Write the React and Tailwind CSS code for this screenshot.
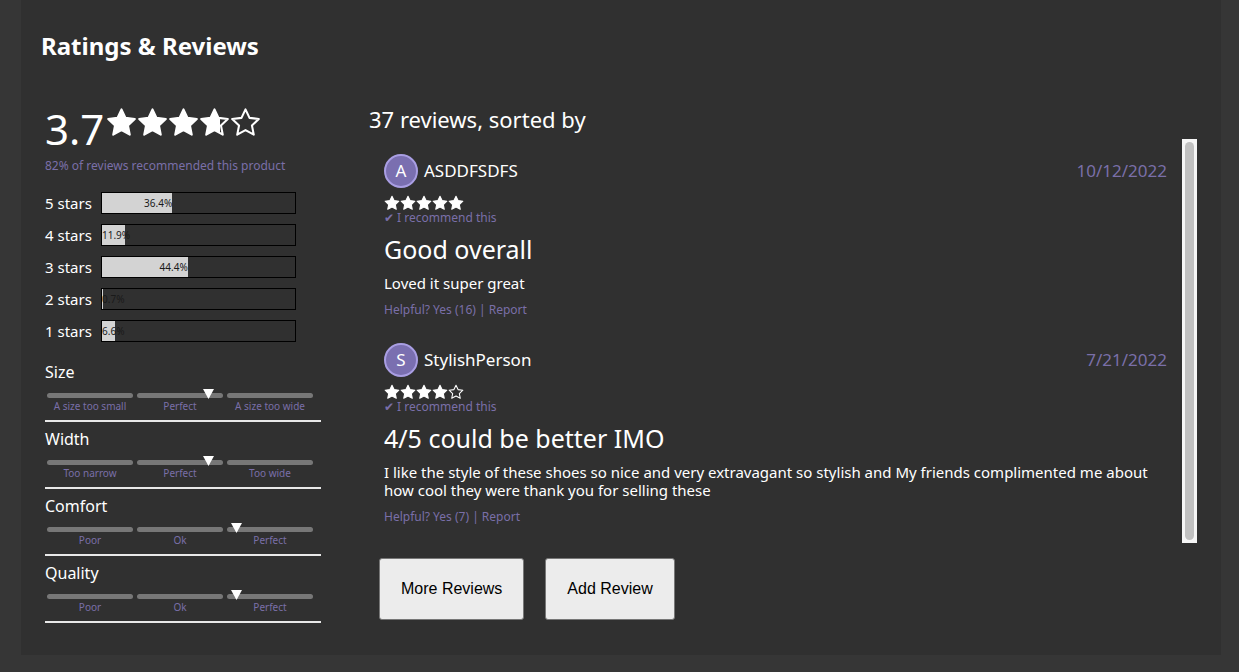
import React from "react";

const purple = "text-[#7a6fa8]";

const STAR = "M12 1.8l3.1 6.6 7.2.9-5.3 5 1.4 7.1L12 17.9l-6.4 3.5 1.4-7.1-5.3-5 7.2-.9z";

function Star({ fill = 1, size = 30, id }) {
  // fill: 0..1
  return (
    <svg width={size} height={size} viewBox="0 0 24 24" className="shrink-0">
      {fill > 0 && fill < 1 && (
        <defs>
          <linearGradient id={id}>
            <stop offset={fill} stopColor="#fff" />
            <stop offset={fill} stopColor="#fff" stopOpacity="0" />
          </linearGradient>
        </defs>
      )}
      <path
        d={STAR}
        fill={fill >= 1 ? "#fff" : fill <= 0 ? "none" : `url(#${id})`}
        stroke="#fff"
        strokeWidth="1.6"
        strokeLinejoin="round"
      />
    </svg>
  );
}

function Stars({ value, size, prefix }) {
  return (
    <div className="flex">
      {[0, 1, 2, 3, 4].map((i) => (
        <Star key={i} size={size} id={`${prefix}-${i}`} fill={Math.max(0, Math.min(1, value - i))} />
      ))}
    </div>
  );
}

const breakdown = [
  { label: "5 stars", pct: 36.4 },
  { label: "4 stars", pct: 11.9 },
  { label: "3 stars", pct: 44.4 },
  { label: "2 stars", pct: 0.7 },
  { label: "1 stars", pct: 6.6 },
];

const factors = [
  { name: "Size", labels: ["A size too small", "Perfect", "A size too wide"], pos: 158 },
  { name: "Width", labels: ["Too narrow", "Perfect", "Too wide"], pos: 158 },
  { name: "Comfort", labels: ["Poor", "Ok", "Perfect"], pos: 186 },
  { name: "Quality", labels: ["Poor", "Ok", "Perfect"], pos: 186 },
];

const reviews = [
  {
    initial: "A",
    name: "ASDDFSDFS",
    date: "10/12/2022",
    rating: 5,
    title: "Good overall",
    body: "Loved it super great",
    helpful: 16,
  },
  {
    initial: "S",
    name: "StylishPerson",
    date: "7/21/2022",
    rating: 4,
    title: "4/5 could be better IMO",
    body: "I like the style of these shoes so nice and very extravagant so stylish and My friends complimented me about how cool they were thank you for selling these",
    helpful: 7,
  },
];

function Factor({ f }) {
  return (
    <div className="border-b-2 border-[#e8e8e8] pb-[7px] mb-[6px]">
      <div className="text-[16px] leading-[22px] text-white">{f.name}</div>
      <div className="relative mt-[1px] pl-[2px] pr-[8px]">
        <div className="flex gap-[4px] pt-[9px]">
          {f.labels.map((l) => (
            <div key={l} className="flex-1">
              <div className="h-[5px] rounded-full bg-[#777]"></div>
              <div className={`text-center text-[10px] leading-[13px] mt-[2px] ${purple}`}>{l}</div>
            </div>
          ))}
        </div>
        <svg width="11" height="10" viewBox="0 0 11 10" className="absolute top-[5px]" style={{ left: f.pos }}>
          <path d="M0 0h11L5.5 10z" fill="#fff" />
        </svg>
      </div>
    </div>
  );
}

function Review({ r, idx }) {
  return (
    <div className="pt-[15px] pb-[10px]">
      <div className="flex items-center justify-between">
        <div className="flex items-center gap-[6px]">
          <div className="w-[34px] h-[34px] rounded-full bg-[#7a6fb0] border-2 border-[#a99ee3] flex items-center justify-center text-white text-[17px]">
            {r.initial}
          </div>
          <div className="text-white text-[17px]">{r.name}</div>
        </div>
        <div className={`text-[17px] ${purple}`}>{r.date}</div>
      </div>
      <div className="mt-[7px]">
        <Stars value={r.rating} size={16} prefix={`r${idx}`} />
      </div>
      <div className={`text-[12px] leading-[14px] ${purple}`}>✔ I recommend this</div>
      <div className="text-white text-[25px] leading-[32px] mt-[8px]">{r.title}</div>
      <div className="text-white text-[15px] leading-[18px] mt-[9px]">{r.body}</div>
      <div className={`text-[12px] leading-[16px] mt-[10px] ${purple}`}>
        Helpful? Yes ({r.helpful}) | Report
      </div>
    </div>
  );
}

export default function App() {
  return (
    <div className="min-h-screen w-full bg-[#363636] font-['Noto_Sans',sans-serif]">
      <div className="ml-[21px] w-[1200px] h-[655px] bg-[#303030] pl-[20px] pt-[30px]">
        <h1 className="text-white text-[24px] leading-[32px] font-bold">Ratings &amp; Reviews</h1>

        <div className="flex mt-[46px]">
          {/* Left summary */}
          <div className="ml-[4px] w-[276px] -mt-[3px]">
            <div className="flex items-center">
              <div className="text-white text-[42px] leading-[48px]">3.7</div>
              <div className="ml-[2px] -mt-[14px]">
                <Stars value={3.7} size={31} prefix="big" />
              </div>
            </div>
            <div className={`text-[12px] leading-[16px] mt-[5px] ${purple}`}>82% of reviews recommended this product</div>

            <div className="mt-[18px] flex flex-col gap-[10px]">
              {breakdown.map((b) => (
                <div key={b.label} className="flex items-center">
                  <div className="w-[56px] text-white text-[15px] leading-[22px]">{b.label}</div>
                  <div className="w-[195px] h-[22px] border border-black">
                    <div
                      className="h-full bg-[#d3d3d3] text-right text-[10px] leading-[20px] text-[#1a1a1a] whitespace-nowrap"
                      style={{ width: `${b.pct}%` }}
                    >
                      {b.pct}%
                    </div>
                  </div>
                </div>
              ))}
            </div>

            <div className="mt-[19px]">
              {factors.map((f) => (
                <Factor key={f.name} f={f} />
              ))}
            </div>
          </div>

          {/* Right list */}
          <div className="ml-[48px] w-[828px]">
            <div className="text-white text-[22px] leading-[28px] -mt-[3px]">37 reviews, sorted by</div>
            <div className="flex h-[404px] mt-[6px]">
              <div className="flex-1 overflow-hidden pl-[15px] pr-[15px]">
                {reviews.map((r, i) => (
                  <Review key={r.name} r={r} idx={i} />
                ))}
              </div>
              <div className="w-[15px] h-full bg-[#f6f6f6] px-[3px] py-[3px]">
                <div className="h-full rounded-full bg-[#c1c1c1]"></div>
              </div>
            </div>
            <div className="flex gap-[21px] mt-[15px] ml-[10px]">
              <button className="h-[62px] px-[21px] bg-[#ececec] border border-[#777] rounded-[3px] text-black text-[16px] font-['Liberation_Sans',Arial,sans-serif]">
                More Reviews
              </button>
              <button className="h-[62px] px-[21px] bg-[#ececec] border border-[#777] rounded-[3px] text-black text-[16px] font-['Liberation_Sans',Arial,sans-serif]">
                Add Review
              </button>
            </div>
          </div>
        </div>
      </div>
    </div>
  );
}
